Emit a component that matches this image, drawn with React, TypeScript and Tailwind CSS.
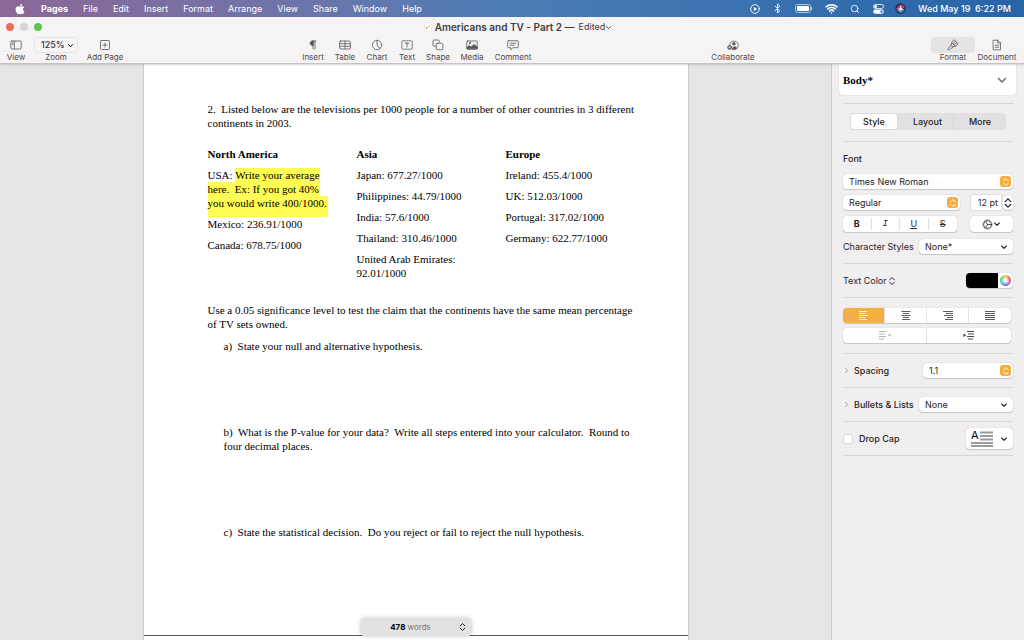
import type { ReactNode } from "react";
import { useState } from "react";
import { FaApple } from "react-icons/fa";
import { Bluetooth, Search, Wifi } from "lucide-react";

const menus = ["File", "Edit", "Insert", "Format", "Arrange", "View", "Share", "Window", "Help"];

const rule = "border-b border-[#d9d6d8]";
const control = "rounded-[4px] bg-white shadow-[0_0_1px_rgba(0,0,0,0.3),0_1px_1px_rgba(0,0,0,0.15)]";

function Icon({ children, size = 12, className = "" }: { children: ReactNode; size?: number; className?: string }) {
  return (
    <svg
      width={size}
      height={size}
      viewBox="0 0 12 12"
      fill="none"
      stroke="currentColor"
      strokeWidth="0.8"
      strokeLinecap="round"
      strokeLinejoin="round"
      className={"shrink-0 " + className}
      aria-hidden="true"
    >
      {children}
    </svg>
  );
}

function Down({ size = 8, className = "" }: { size?: number; className?: string }) {
  return (
    <Icon size={size} className={className}>
      <path d="M2.5 4.5 6 8l3.5-3.5" strokeWidth="1.7" />
    </Icon>
  );
}

function UpDown({ size = 10, className = "" }: { size?: number; className?: string }) {
  return (
    <Icon size={size} className={className}>
      <path d="M3.2 4.6 6 1.8l2.8 2.8M3.2 7.4 6 10.2l2.8-2.8" strokeWidth="1.2" />
    </Icon>
  );
}

function MenuBar() {
  return (
    <header className="flex h-[17px] shrink-0 items-center bg-linear-to-r from-[#8b6797] via-[#4b7db6] to-[#2464a7] pr-[13px] pl-[14px] text-[9px] text-white">
      <FaApple size={12} aria-label="Apple" />
      <nav className="ml-[15px] flex gap-[15px]">
        <button className="font-bold">Pages</button>
        {menus.map((m) => (
          <button key={m}>{m}</button>
        ))}
      </nav>
      <div className="ml-auto flex items-center">
        <Icon size={10} className="mr-[12px]">
          <circle cx="6" cy="6" r="5.2" strokeWidth="1.1" />
          <path d="M4.6 3.6v4.8L8.6 6z" fill="currentColor" stroke="none" />
        </Icon>
        <Bluetooth size={11} className="mr-[12px]" />
        <svg width="18" height="9" viewBox="0 0 18 9" className="mr-[12px]" aria-hidden="true">
          <rect x="0.5" y="0.5" width="15" height="8" rx="2" fill="none" stroke="#c9dcec" strokeWidth="0.8" />
          <rect x="2" y="2" width="12" height="5" rx="0.8" fill="#fff" />
          <path d="M16.6 3.2v2.6" stroke="#c9dcec" />
        </svg>
        <Wifi size={13} strokeWidth={3} className="mr-[12px]" />
        <Search size={10} className="mr-[13px]" />
        <svg width="11" height="10" viewBox="0 0 11 10" className="mr-[11px]" aria-hidden="true">
          <rect x="0.5" y="0.5" width="10" height="4" rx="2" fill="none" stroke="#fff" strokeWidth="0.8" />
          <circle cx="2.6" cy="2.5" r="1.5" fill="#fff" />
          <rect x="0.3" y="5.5" width="10.4" height="4.3" rx="2.1" fill="#fff" />
          <circle cx="8.5" cy="7.6" r="1.2" fill="#3a73ae" />
        </svg>
        <svg width="11" height="11" viewBox="0 0 11 11" className="mr-3" aria-hidden="true">
          <circle cx="5.5" cy="5.5" r="5.3" fill="#33284f" />
          <path d="M1 6.5C2 4 3.5 2.5 6 1.5 8 2 9 3 9.8 4.5L6 6z" fill="#b4447c" />
          <path d="M1.5 8C3 6 5 5 9.8 6.5 9 8.5 8 9.5 6 10z" fill="#3f83bd" />
          <path d="M5.5 2.5 6.5 5 9 6.5l-2.7.2L5 9l-.3-2.5L2 6l2.7-.8z" fill="#f4eef8" />
        </svg>
        <time className="font-medium whitespace-pre">Wed May 19  6:22 PM</time>
      </div>
    </header>
  );
}

function Tool({ label, width, active, children }: { label: string; width: string; active?: boolean; children: ReactNode }) {
  return (
    <button className={"flex shrink-0 flex-col items-center text-[#5a5759] " + width}>
      <span className={"flex h-4 w-full items-center justify-center rounded-[4px] " + (active ? "bg-[#e6e3e5]" : "")}>
        {children}
      </span>
      <span className="text-[8px] leading-[9px] whitespace-nowrap text-[#4b484a]">{label}</span>
    </button>
  );
}

function Toolbar() {
  return (
    <div className="z-10 shrink-0 border-b border-[#c5c2c4] bg-[#f6f3f5] pt-[2px] shadow-[0_1px_2px_rgba(0,0,0,0.15)]">
      <div className="grid h-4 grid-cols-[1fr_auto_1fr] items-center px-[6px]">
        <div className="flex gap-[6px]">
          <button aria-label="Close" className="size-2 rounded-full bg-[#ed6a5e]" />
          <button aria-label="Minimize" className="size-2 rounded-full bg-[#d8d5d7]" />
          <button aria-label="Zoom window" className="size-2 rounded-full bg-[#5fc454]" />
        </div>
        <h1 className="ml-3 flex items-center text-[10px] leading-4 font-semibold text-[#403d3f]">
          <svg width="8" height="10" viewBox="0 0 9 11" className="mr-[3px]" aria-hidden="true">
            <path d="M.5.5H6L8.5 3v7.5h-8z" fill="#fff" stroke="#ddd" strokeWidth="0.6" />
            <path d="M2.5 8 6.5 3.5" stroke="#e79a3c" strokeWidth="1.1" />
            <path d="M2 5.5 3 7" stroke="#777" strokeWidth="0.7" />
          </svg>
          <span>Americans and TV - Part 2 —</span>
          <button className="ml-1 flex items-center text-[9px] font-normal">
            Edited
            <Down size={7} />
          </button>
        </h1>
      </div>
      <div className="flex pt-[2px] pr-[5px] pb-px">
        <Tool label="View" width="w-8">
          <Icon>
            <rect x="0.8" y="2" width="10.4" height="8" rx="1" />
            <path d="M4.3 2v8M2.2 4h.8M2.2 5.5h.8" />
          </Icon>
        </Tool>
        <div className="flex w-12 flex-col items-center">
          <div className="relative h-4">
            <select
              id="zoom"
              className="block h-4 w-11 appearance-none rounded-[4px] border border-[#e5e2e4] pl-[6px] text-[9px] leading-[14px] font-medium text-[#3b383a]"
            >
              <option>125%</option>
            </select>
            <Down size={7} className="pointer-events-none absolute top-[5px] right-[4px]" />
          </div>
          <label htmlFor="zoom" className="text-[8px] leading-[9px] text-[#4b484a]">
            Zoom
          </label>
        </div>
        <Tool label="Add Page" width="w-[50px]">
          <Icon>
            <rect x="1.5" y="1.5" width="9" height="9" rx="0.8" />
            <path d="M6 4v4M4 6h4" />
          </Icon>
        </Tool>
        <span className="flex-[167_1_0%]" />
        <Tool label="Insert" width="w-8">
          <Icon>
            <path d="M6 2C2 2 2 6.5 6 6.5z" fill="currentColor" />
            <path d="M6 2v8M8 2v8M5 2h4" />
          </Icon>
        </Tool>
        <Tool label="Table" width="w-8">
          <Icon>
            <rect x="0.7" y="2" width="10.6" height="8" rx="1" />
            <path d="M.7 4.7h10.6M.7 7.3h10.6M6 2v8" />
          </Icon>
        </Tool>
        <Tool label="Chart" width="w-8">
          <Icon>
            <circle cx="6" cy="6" r="4.7" />
            <path d="M6 1.3V6l3 3.6" />
          </Icon>
        </Tool>
        <Tool label="Text" width="w-7">
          <Icon>
            <rect x="0.8" y="1.8" width="10.4" height="8.4" rx="0.8" strokeDasharray="2.2 0.9" />
            <path d="M4.3 4.2h3.4M6 4.2v3.8" />
          </Icon>
        </Tool>
        <Tool label="Shape" width="w-[34px]">
          <Icon>
            <path d="M3.5 7.2H2A1 1 0 0 1 1 6.2V2a1 1 0 0 1 1-1h4.2a1 1 0 0 1 1 1v1.2" />
            <path d="M5.3 4.3h4.5a1 1 0 0 1 1 1V9.7a1 1 0 0 1-1 1H5.3a1 1 0 0 1-1-1V5.3a1 1 0 0 1 1-1z" />
          </Icon>
        </Tool>
        <Tool label="Media" width="w-[34px]">
          <Icon>
            <rect x="0.8" y="2" width="10.4" height="8" rx="0.8" />
            <path d="M1 9.7V8.4l2.5-2L5.3 7.9 8 5.4l3.2 2.6v1.7z" fill="currentColor" />
            <circle cx="4" cy="4" r="0.6" fill="currentColor" />
          </Icon>
        </Tool>
        <Tool label="Comment" width="w-12">
          <Icon>
            <path d="M1.7 1.7h8.6a1 1 0 0 1 1 1v5a1 1 0 0 1-1 1H5.8L3.8 10.8V8.7H1.7a1 1 0 0 1-1-1v-5a1 1 0 0 1 1-1zM3.2 4.2h5.6M3.2 6.2h4" />
          </Icon>
        </Tool>
        <span className="flex-[172_1_0%]" />
        <Tool label="Collaborate" width="w-12">
          <Icon>
            <path d="M2.7 5.5a4.3 4.3 0 1 1 4 5.2" />
            <circle cx="6.8" cy="4.8" r="1.3" fill="currentColor" />
            <path d="M5.6 10.2c0-3.2 3.2-3.2 4-1.1-.8 1-2.2 1.4-4 1.1z" fill="currentColor" />
            <circle cx="2.7" cy="8.4" r="2" fill="currentColor" />
            <path d="M2.7 7.4v2M1.7 8.4h2" stroke="#f6f3f5" strokeWidth="0.6" />
          </Icon>
        </Tool>
        <span className="flex-[174_1_0%]" />
        <Tool label="Format" width="w-11" active>
          <Icon>
            <path d="M7.5 1 11 4.5 8.2 7.2 4.8 3.8zM4.8 3.8 4 6.2l1.8 1.8 2.4-.8M4 6.2 1.2 9.5a.8.8 0 0 0 1.3 1.3L5.8 8M6.5 4.2l2-1.7M7.7 5.4l2-1.7" />
          </Icon>
        </Tool>
        <Tool label="Document" width="w-11">
          <Icon>
            <path d="M2.5 1.2h4.2l2.8 2.8v6.8h-7zM6.7 1.2V4h2.8M4.2 6.2h3.6M4.2 8.2h3.6" />
          </Icon>
        </Tool>
      </div>
    </div>
  );
}

function Column({ title, children }: { title: string; children: ReactNode }) {
  return (
    <section className="flex flex-col gap-[7px]">
      <h2 className="font-bold">{title}</h2>
      {children}
    </section>
  );
}

function Paper() {
  return (
    <article className="flex w-[546px] flex-col border-x border-[#cfcdce] bg-white">
      <div className="flex-1 border-b border-[#5c5c5c] pt-[38px] pr-12 pl-16 font-['Liberation_Serif','Times_New_Roman',serif] text-[11px] leading-[14px] whitespace-pre-wrap text-black">
        <p>2.  Listed below are the televisions per 1000 people for a number of other countries in 3 different continents in 2003.</p>
        <div className="mt-[17px] grid grid-cols-[149px_149px_1fr]">
          <Column title="North America">
            <p>
              USA: <mark className="bg-[#fffc54] py-px">Write your average</mark>
              <mark className="block w-[112px] bg-[#fffc54]">here.  Ex: If you got 40%</mark>
              <mark className="-mb-[7px] block h-[21px] w-[120px] bg-[#fffc54]">you would write 400/1000.</mark>
            </p>
            <p>Mexico: 236.91/1000</p>
            <p>Canada: 678.75/1000</p>
          </Column>
          <Column title="Asia">
            <p>Japan: 677.27/1000</p>
            <p>Philippines: 44.79/1000</p>
            <p>India: 57.6/1000</p>
            <p>Thailand: 310.46/1000</p>
            <p className="pr-5">United Arab Emirates: 92.01/1000</p>
          </Column>
          <Column title="Europe">
            <p>Ireland: 455.4/1000</p>
            <p>UK: 512.03/1000</p>
            <p>Portugal: 317.02/1000</p>
            <p>Germany: 622.77/1000</p>
          </Column>
        </div>
        <p className="mt-[23px]">
          Use a 0.05 significance level to test the claim that the continents have the same mean percentage of TV sets owned.
        </p>
        <div className="mt-2 flex flex-col gap-[72px] pl-4">
          <p>a)  State your null and alternative hypothesis.</p>
          <p>b)  What is the P-value for your data?  Write all steps entered into your calculator.  Round to four decimal places.</p>
          <p>c)  State the statistical decision.  Do you reject or fail to reject the null hypothesis.</p>
        </div>
      </div>
      <div className="h-1" />
    </article>
  );
}

function Select({ id, value, width, accent, label }: { id: string; value: string; width: string; accent?: boolean; label?: string }) {
  return (
    <div className={"relative shrink-0 " + width}>
      <select id={id} aria-label={label} className={"block h-[15px] w-full appearance-none pl-[6px] text-[9px] " + control}>
        <option>{value}</option>
      </select>
      {accent ? (
        <span className="pointer-events-none absolute top-[2px] right-[2px] flex size-[11px] items-center justify-center rounded-[3px] bg-[#f3ae3d] text-white">
          <UpDown />
        </span>
      ) : (
        <Down className="pointer-events-none absolute top-1 right-[5px]" />
      )}
    </div>
  );
}

const alignments = [
  ["Align left", "M0 .5h8M0 2.5h6M0 4.5h9M0 6.5h6M0 8.5h8"],
  ["Center", "M.5.5h9M2 2.5h6M.5 4.5h9M2 6.5h6M1 8.5h8"],
  ["Align right", "M0 .5h10M3 2.5h7M1 4.5h9M4 6.5h6M2 8.5h8"],
  ["Justify", "M0 .5h10M0 2.5h10M0 4.5h10M0 6.5h10M0 8.5h10"],
];

function Sidebar() {
  const [tab, setTab] = useState("Style");
  const [align, setAlign] = useState("Align left");

  return (
    <aside className="w-[193px] shrink-0 border-l border-[#cbc8ca] bg-[#f1eef0] px-[11px] text-[9px] leading-3 text-[#262425]">
      <div className={rule + " -mr-px pb-2"}>
        <button className="-mr-1 -ml-1 flex h-[31px] w-[177px] items-center justify-between rounded-b-[4px] bg-white pr-2 pl-1 shadow-[0_0_1px_rgba(0,0,0,0.3)]">
          <span className="font-['Liberation_Serif','Times_New_Roman',serif] text-[11px] font-bold text-black">Body*</span>
          <Down size={12} className="text-[#777]" />
        </button>
      </div>

      <div className={rule + " px-[7px] pt-[9px] pb-[11px]"}>
        <div role="tablist" className="grid h-[17px] grid-cols-3 rounded-[4px] bg-[#e3e0e2] font-medium">
          {["Style", "Layout", "More"].map((t) => (
            <button
              key={t}
              role="tab"
              aria-selected={tab === t}
              onClick={() => setTab(t)}
              className={tab === t ? "mr-1 rounded-[4px] border border-[#dcd9db] bg-white" : "border-r border-[#d8d5d7] last:border-0"}
            >
              {t}
            </button>
          ))}
        </div>
      </div>

      <div className={rule + " flex flex-col gap-[6px] pt-[11px] pb-[9px]"}>
        <h3 className="mb-[3px] font-medium">Font</h3>
        <Select id="family" label="Font family" value="Times New Roman" width="w-full" accent />
        <div className="flex items-center">
          <Select id="weight" label="Typeface" value="Regular" width="w-[117px]" accent />
          <input aria-label="Size" defaultValue="12 pt" className="ml-auto h-[15px] w-[30px] bg-white pr-[3px] text-right shadow-[0_0_1px_rgba(0,0,0,0.4)]" />
          <button aria-label="Step size" className={"ml-[2px] flex h-[15px] w-[10px] items-center justify-center " + control}>
            <UpDown size={12} />
          </button>
        </div>
        <div className="flex items-center justify-between pb-px">
          <div className={"grid h-4 w-[114px] grid-cols-4 items-center divide-x divide-[#e3e0e2] " + control}>
            <button className="font-bold">B</button>
            <button className="font-['Liberation_Mono',monospace] italic">I</button>
            <button className="underline">U</button>
            <button className="line-through">S</button>
          </div>
          <button aria-label="Text options" className={"flex h-4 w-[43px] items-center justify-center " + control}>
            <Icon size={11}>
              <circle cx="6" cy="6" r="4.3" strokeWidth="0.9" />
              <circle cx="6" cy="6" r="5.2" strokeWidth="0.9" strokeDasharray="0.8 1.5" strokeLinecap="butt" />
              <path d="M6 6h4.2M6 6 4 2.4M6 6 4 9.6" />
            </Icon>
            <Down />
          </button>
        </div>
        <div className="flex items-center justify-between">
          <label htmlFor="charstyle" className="whitespace-nowrap">Character Styles</label>
          <Select id="charstyle" value="None*" width="w-[94px]" />
        </div>
      </div>

      <div className={rule + " flex items-center justify-between py-[9px]"}>
        <button className="flex items-center">
          Text Color
          <UpDown />
        </button>
        <button aria-label="Text color" className={"flex h-[15px] w-[47px] overflow-hidden " + control}>
          <span className="h-full flex-1 bg-black" />
          <span className="m-[2px] size-[11px] rounded-full bg-[radial-gradient(circle,white_10%,transparent_60%),conic-gradient(#f5c842,#e8604c,#d65cc0,#6a6fe8,#4cc2e8,#5fd068,#f5c842)]" />
        </button>
      </div>

      <div className={rule + " pt-[10px] pb-[10px]"}>
        <div className="mr-[2px] flex flex-col gap-[5px]">
          <div className={"grid h-[15px] grid-cols-4 overflow-hidden " + control}>
            {alignments.map(([name, d]) => (
              <button
                key={name}
                aria-label={name}
                onClick={() => setAlign(name)}
                className={"flex items-center justify-center border-r border-[#e3e0e2] last:border-0 " + (align === name ? "bg-[#f3b040] text-white" : "text-[#333]")}
              >
                <svg width="10" height="9" viewBox="0 0 10 9" stroke="currentColor" strokeWidth="0.8" aria-hidden="true">
                  <path d={d} />
                </svg>
              </button>
            ))}
          </div>
          <div className={"grid h-[15px] grid-cols-2 divide-x divide-[#e3e0e2] " + control}>
            <button aria-label="Decrease indent" disabled className="flex items-center justify-center text-[#aaa]">
              <svg width="12" height="9" viewBox="0 0 12 9" stroke="currentColor" strokeWidth="0.9" aria-hidden="true">
                <path d="M0 .5h7M0 3h6M0 5.5h7M0 8h5" />
                <path d="M11.5 2.8v3L9 4.3z" fill="currentColor" stroke="none" />
              </svg>
            </button>
            <button aria-label="Increase indent" className="flex items-center justify-center text-[#333]">
              <svg width="12" height="9" viewBox="0 0 12 9" stroke="currentColor" strokeWidth="0.9" aria-hidden="true">
                <path d="M4 .5h7M5 3h6M4 5.5h7M5 8h5" />
                <path d="M.5 2.5v3.6L3 4.3z" fill="currentColor" stroke="none" />
              </svg>
            </button>
          </div>
        </div>
      </div>

      <div className={rule + " flex items-center py-[9px]"}>
        <Down size={7} className="-rotate-90 text-[#999]" />
        <label htmlFor="spacing" className="ml-1 font-medium">Spacing</label>
        <span className="flex-1" />
        <Select id="spacing" value="1.1" width="w-[90px]" accent />
      </div>

      <div className={rule + " flex items-center py-[9px]"}>
        <Down size={7} className="-rotate-90 text-[#999]" />
        <label htmlFor="bullets" className="ml-1 font-medium whitespace-nowrap">Bullets &amp; Lists</label>
        <span className="flex-1" />
        <Select id="bullets" value="None" width="w-[94px]" />
      </div>

      <div className={rule + " flex items-center justify-between py-[6px]"}>
        <label className="flex items-center gap-[6px] font-medium">
          <input type="checkbox" className="size-[10px] appearance-none rounded-[3px] border border-[#dbd8da] bg-white checked:bg-[#f3ae3d]" />
          Drop Cap
        </label>
        <button aria-label="Drop cap style" className={"flex h-[21px] w-[47px] items-center justify-between px-[5px] " + control}>
          <span className="relative">
            <svg width="22" height="16" viewBox="0 0 22 16" stroke="#9a9a9a" strokeWidth="1.8" aria-hidden="true">
              <path d="M9 1.5h13M9 5h13M9 8.5h13M0 12h22M0 15h22" />
            </svg>
            <span className="absolute -top-px left-0 text-[11px] leading-[11px] text-black">A</span>
          </span>
          <Down />
        </button>
      </div>
    </aside>
  );
}

export default function App() {
  return (
    <div className="flex h-screen flex-col overflow-hidden font-['Inter',sans-serif]">
      <MenuBar />
      <Toolbar />
      <div className="flex min-h-0 flex-1">
        <main className="relative flex flex-1 justify-center bg-[#e6e4e5]">
          <Paper />
          <button className="absolute bottom-1 left-1/2 flex h-[18px] w-[111px] -translate-x-1/2 items-center justify-center rounded-[4px] bg-[#e4e1e3] pr-[10px] text-[8px] text-[#777] shadow-[0_0_5px_rgba(0,0,0,0.2)]">
            <span>
              <b className="text-black">478</b> words
            </span>
            <UpDown className="absolute right-1 text-[#222]" />
          </button>
        </main>
        <Sidebar />
      </div>
    </div>
  );
}
